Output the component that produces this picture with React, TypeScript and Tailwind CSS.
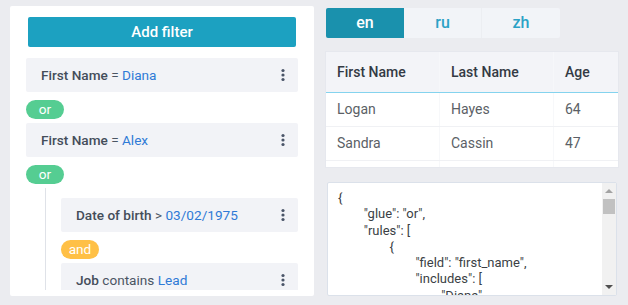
import React from 'react';

const json = {
  glue: 'or',
  rules: [
    {
      field: 'first_name',
      includes: ['Diana'],
    },
    {
      field: 'first_name',
      includes: ['Alex'],
    },
    {
      glue: 'and',
      rules: [
        { field: 'birthdate', type: 'greater', condition: '1975-03-02' },
        { field: 'job', type: 'contains', condition: 'Lead' },
      ],
    },
  ],
};

const people = [
  { first: 'Logan', last: 'Hayes', age: '64' },
  { first: 'Sandra', last: 'Cassin', age: '47' },
  { first: '', last: '', age: '' },
];

function Dots() {
  return (
    <svg width="4" height="14" viewBox="0 0 4 14" className="shrink-0">
      <circle cx="2" cy="2.5" r="1.6" fill="#4a5568" />
      <circle cx="2" cy="7" r="1.6" fill="#4a5568" />
      <circle cx="2" cy="11.5" r="1.6" fill="#4a5568" />
    </svg>
  );
}

function Rule({ field, op, value }: { field: string; op: string; value: string }) {
  return (
    <div className="h-[34px] bg-[#f2f3f7] rounded-[2px] flex items-center justify-between pl-[15px] pr-[13px]">
      <div className="text-[13.6px] text-[#4b5563]">
        <span className="font-medium text-[#444d5a]">{field}</span>{' '}
        <span>{op}</span>{' '}
        <span className="text-[#2f7ad6]">{value}</span>
      </div>
      <Dots />
    </div>
  );
}

function Glue({ label, color }: { label: string; color: string }) {
  return (
    <div className={`h-[19px] w-[38px] rounded-full flex items-center justify-center text-[13.6px] text-white leading-none ${color}`}>
      {label}
    </div>
  );
}

export default function App() {
  return (
    <div className="w-[628px] h-[305px] bg-[#ebecf0] flex gap-[11px] pl-[10px] pt-[6px] font-['Roboto',sans-serif] overflow-hidden">
      {/* FILTER BUILDER */}
      <div className="w-[304px] h-[290px] bg-white rounded-[2px] pt-[11px] pb-[6px] px-[16px] flex flex-col">
        <div className="flex-1 overflow-hidden">
          <div className="px-[2px]">
            <button className="w-full h-[30px] bg-[#1ca1c1] text-white text-[15px] font-medium rounded-[2px]">
              Add filter
            </button>
          </div>
          <div className="mt-[11px]">
            <Rule field="First Name" op="=" value="Diana" />
            <div className="mt-[8px] mb-[4px]">
              <Glue label="or" color="bg-[#55cd92]" />
            </div>
            <Rule field="First Name" op="=" value="Alex" />
            <div className="mt-[8px]">
              <Glue label="or" color="bg-[#55cd92]" />
            </div>
            <div className="ml-[19px] mt-[4px] border-l border-[#dfe2e8] pl-[15px] pt-[10px]">
              <Rule field="Date of birth" op=">" value="03/02/1975" />
              <div className="mt-[8px] mb-[4px]">
                <Glue label="and" color="bg-[#ffc046]" />
              </div>
              <Rule field="Job" op="contains" value="Lead" />
              <div className="h-[40px]" />
            </div>
          </div>
        </div>
      </div>

      {/* RIGHT SIDE */}
      <div className="w-[294px] pt-[2px] flex flex-col">
        <div className="flex ml-[1px]">
          {['en', 'ru', 'zh'].map((l, i) => (
            <div
              key={l}
              className={`w-[78px] h-[30px] flex items-center justify-center text-[16px] font-medium ${
                i === 0 ? 'bg-[#1a91ad] text-white rounded-l-[2px]' : 'bg-[#f2f4f8] text-[#2ba2c6]'
              } ${i === 2 ? 'rounded-r-[2px]' : ''} ${i === 1 ? 'border-r border-[#eceef2]' : ''}`}
            >
              {l}
            </div>
          ))}
        </div>

        <div className="mt-[13px] h-[117px] bg-white border border-[#e6e8ee] overflow-hidden">
          <div className="grid grid-cols-[114px_114px_1fr] h-[41px] bg-[#f3f4f8] border-b border-[#84d3ee] text-[14px] font-medium text-[#333a44]">
            <div className="flex items-center px-[11px] border-r border-[#f6f7fa]">First Name</div>
            <div className="flex items-center px-[11px] border-r border-[#f6f7fa]">Last Name</div>
            <div className="flex items-center px-[11px]">Age</div>
          </div>
          {people.map((p, i) => (
            <div
              key={i}
              className="grid grid-cols-[114px_114px_1fr] h-[34px] border-b border-[#f0f1f4] text-[14px] text-[#5b5f66]"
            >
              <div className="flex items-center px-[11px] border-r border-[#f7f8fa]">{p.first}</div>
              <div className="flex items-center px-[11px] border-r border-[#f7f8fa]">{p.last}</div>
              <div className="flex items-center px-[11px]">{p.age}</div>
            </div>
          ))}
        </div>

        {/* JSON OUTPUT */}
        <div className="mt-[14px] ml-[2px] w-[290px] h-[114px] bg-white border border-[#dbe1ea] rounded-[2px] flex overflow-hidden">
          <pre className="flex-1 overflow-hidden pl-[10px] pt-[7px] text-[13px] leading-[16.3px] text-[#3b3f45] font-['Roboto',sans-serif] [tab-size:8]">
            {JSON.stringify(json, null, '\t')}
          </pre>
          <div className="w-[14px] bg-[#f1f1f1] flex flex-col items-center">
            <div className="h-[16px] flex items-center justify-center">
              <div className="w-0 h-0 border-l-[4px] border-r-[4px] border-b-[4px] border-l-transparent border-r-transparent border-b-[#a3a3a3]" />
            </div>
            <div className="w-[12px] h-[15px] bg-[#c1c1c1]" />
            <div className="flex-1" />
            <div className="h-[16px] flex items-center justify-center">
              <div className="w-0 h-0 border-l-[4px] border-r-[4px] border-t-[4px] border-l-transparent border-r-transparent border-t-[#505050]" />
            </div>
          </div>
        </div>
      </div>
    </div>
  );
}
